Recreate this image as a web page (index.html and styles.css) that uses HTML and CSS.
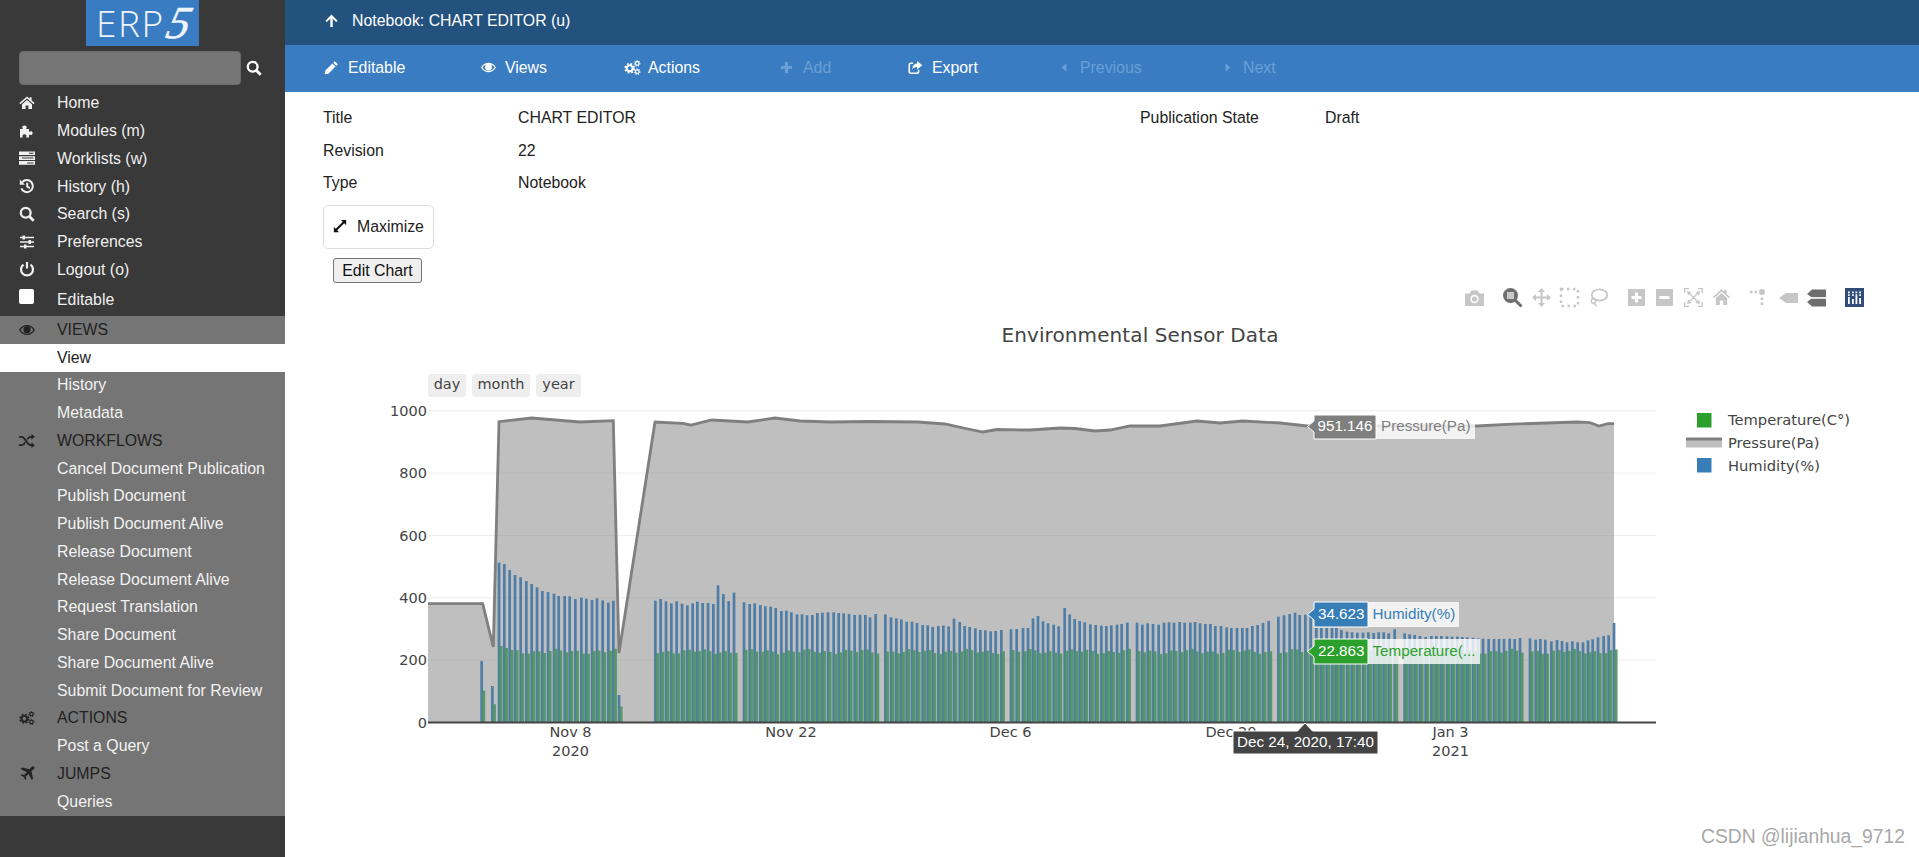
FILE: index.html
```html
<!DOCTYPE html>
<html lang="en">
<head>
<meta charset="utf-8">
<title>Notebook: CHART EDITOR</title>
<link rel="stylesheet" href="styles.css">
</head>
<body>
<svg class="defs" aria-hidden="true">
  <symbol id="i-home" viewBox="0 0 16 16"><path d="M8 1.4 .4 8l1 1.2L8 3.6l6.6 5.6 1-1.2-3-2.6V2.2h-2v1.6z"/><path d="M8 4.900 3 9.200V14h3.600v-3.400h2.800V14H13V9.200z"/></symbol>
  <symbol id="i-puzzle" viewBox="0 0 16 16"><path d="M1 6h3c-.9-.9-1-2.200-.2-3 .8-.8 2.700-.8 3.400 0 .8.8.7 2.100-.2 3h3v3c1-.8 2.300-.9 3.100-.2.800.8.800 2 0 2.700-.8.800-2.100.7-3.100-.1v3.100H7c.7-1 .7-2-.1-2.700-.8-.7-2.100-.7-2.900 0-.7.700-.7 1.700 0 2.700H1z"/></symbol>
  <symbol id="i-tasks" viewBox="0 0 16 16"><path fill-rule="evenodd" d="M0 1.500h16v3.600H0zM10 2.800v1h4.500v-1zM0 6.300h16v3.600H0zM3 7.600v1h11.500v-1zM0 11.100h16v3.600H0zM8 12.400v1h6.500v-1z"/></symbol>
  <symbol id="i-history" viewBox="0 0 16 16"><path class="ln" d="M3.300 4.200a6 6 0 1 1-1 6.200"/><path d="M.8 1.600v5.200H6z"/><path class="ln" d="M8.200 4.800v3.700l2.600 1.600"/></symbol>
  <symbol id="i-search" viewBox="0 0 16 16"><circle class="ln" cx="6.700" cy="6.700" r="4.900" stroke-width="2.300"/><path class="ln" stroke-width="2.800" d="M10.200 10.200l4.500 4.500"/></symbol>
  <symbol id="i-sliders" viewBox="0 0 16 16"><path d="M1 2.800h14v1.400H1zM1 7.300h14v1.400H1zM1 11.800h14v1.400H1z"/><path d="M3.500 1.500h2.500v4H3.500zM9.500 6h2.500v4H9.500zM5 10.500h2.500v4H5z"/></symbol>
  <symbol id="i-power" viewBox="0 0 16 16"><path class="ln" stroke-width="2.200" d="M4.500 3.600a6 6 0 1 0 7 0"/><path class="ln" stroke-width="2.200" d="M8 1v6.500"/></symbol>
  <symbol id="i-eye" viewBox="0 0 16 16"><path fill-rule="evenodd" d="M0 8c2-3.400 4.800-5 8-5s6 1.600 8 5c-2 3.400-4.800 5-8 5S2 11.400 0 8zm1.500 0c1.600 2.400 3.800 3.800 6.500 3.800s4.900-1.400 6.500-3.800C12.900 5.600 10.700 4.200 8 4.200S3.100 5.600 1.500 8z"/><circle cx="8" cy="7.700" r="3.600"/></symbol>
  <symbol id="i-random" viewBox="0 0 16 16"><path class="ln" stroke-width="1.800" d="M0 3.800h2.800c3.400 0 5.400 8.400 8.800 8.400h1.400M0 12.200h2.800c1.400 0 2.500-1.500 3.400-3M8.200 6.200c.9-1.400 2-2.400 3.400-2.400h1.400"/><path d="M12.400 1l3.600 2.800-3.600 2.800zM12.400 9.400l3.600 2.800-3.600 2.800z"/></symbol>
  <symbol id="i-cogs" viewBox="0 0 18 16"><circle class="ln" cx="6" cy="8.800" r="3.200" stroke-width="2.200"/><circle class="ln" cx="6" cy="8.800" r="4.800" stroke-width="1.800" stroke-dasharray="2 1.800"/><circle class="ln" cx="14" cy="3.600" r="1.900" stroke-width="1.300"/><circle class="ln" cx="14" cy="3.600" r="2.900" stroke-width="1.100" stroke-dasharray="1.300 1.200"/><circle class="ln" cx="14" cy="12.400" r="1.900" stroke-width="1.300"/><circle class="ln" cx="14" cy="12.400" r="2.900" stroke-width="1.100" stroke-dasharray="1.300 1.200"/></symbol>
  <symbol id="i-plane" viewBox="0 0 16 16"><path d="M14.600.6c.8.500.9 1.500 0 2.500l-2.600 2.500 1.800 7.800-1.400 1.400-3.400-6.500-3 2.800.7 2.700-1 1-1.800-3.200-3.200-1.800 1-1 2.700.7 2.800-3-6.500-3.400 1.400-1.400 7.800 1.800 2.500-2.600c.4-.4.800-.5 1.200-.3z" transform="translate(1 0) scale(.95)"/></symbol>
  <symbol id="i-up" viewBox="0 0 16 16"><path d="M8 1.500l6.500 6.700-1.500 1.500-3.700-3.700V15H6.700V6L3 9.700 1.500 8.200z"/></symbol>
  <symbol id="i-pencil" viewBox="0 0 16 16"><path d="M11.500 1.200l3.300 3.300-1.600 1.600-3.300-3.300zM9 3.700l3.300 3.300-7.600 7.600-4 .7.700-4z"/></symbol>
  <symbol id="i-plus" viewBox="0 0 16 16"><path d="M6.300 2h3.400v4.300H14v3.400H9.700V14H6.300V9.700H2V6.300h4.300z"/></symbol>
  <symbol id="i-export" viewBox="0 0 16 16"><path class="ln" stroke-width="1.600" d="M5.500 3.500H3.200C2 3.500 1.300 4.200 1.300 5.400v6.900c0 1.200.7 1.900 1.900 1.900h6.200c1.200 0 1.900-.7 1.900-1.900v-2"/><path d="M9.700 1l5.500 4.500-5.500 4.500V7.500C7 7.500 5.300 8.400 4.700 10.500 4.500 6.800 6.300 4 9.700 3.700z"/></symbol>
  <symbol id="i-left" viewBox="0 0 16 16"><path d="M10 3.500v9L5 8z"/></symbol>
  <symbol id="i-right" viewBox="0 0 16 16"><path d="M6 3.500v9L11 8z"/></symbol>
  <symbol id="i-expand" viewBox="0 0 16 16"><path d="M9 1h6v6l-2.200-2.200-8 8L7 15H1V9l2.200 2.200 8-8z"/></symbol>
</svg>

<div class="app">
  <aside class="sidebar">
    <div class="logo"><span class="logo-erp">ERP</span><span class="logo-five">5</span></div>
    <div class="searchbar">
      <input class="searchinput" type="text" aria-label="Search">
      <svg class="search-icon"><use href="#i-search"/></svg>
    </div>
    <nav class="mainnav">
      <a class="row"><svg class="ico"><use href="#i-home"/></svg>Home</a>
      <a class="row"><svg class="ico"><use href="#i-puzzle"/></svg>Modules (m)</a>
      <a class="row"><svg class="ico"><use href="#i-tasks"/></svg>Worklists (w)</a>
      <a class="row"><svg class="ico"><use href="#i-history"/></svg>History (h)</a>
      <a class="row"><svg class="ico"><use href="#i-search"/></svg>Search (s)</a>
      <a class="row"><svg class="ico"><use href="#i-sliders"/></svg>Preferences</a>
      <a class="row"><svg class="ico"><use href="#i-power"/></svg>Logout (o)</a>
      <label class="row row-check"><span class="check"></span>Editable</label>
    </nav>
    <nav class="subnav">
      <div class="row head"><svg class="ico"><use href="#i-eye"/></svg>VIEWS</div>
      <a class="row current">View</a>
      <a class="row">History</a>
      <a class="row">Metadata</a>
      <div class="row head"><svg class="ico"><use href="#i-random"/></svg>WORKFLOWS</div>
      <a class="row">Cancel Document Publication</a>
      <a class="row">Publish Document</a>
      <a class="row">Publish Document Alive</a>
      <a class="row">Release Document</a>
      <a class="row">Release Document Alive</a>
      <a class="row">Request Translation</a>
      <a class="row">Share Document</a>
      <a class="row">Share Document Alive</a>
      <a class="row">Submit Document for Review</a>
      <div class="row head"><svg class="ico"><use href="#i-cogs"/></svg>ACTIONS</div>
      <a class="row">Post a Query</a>
      <div class="row head"><svg class="ico"><use href="#i-plane"/></svg>JUMPS</div>
      <a class="row">Queries</a>
    </nav>
  </aside>

  <main class="content">
    <header class="titlebar"><svg class="ico-up"><use href="#i-up"/></svg>Notebook: CHART EDITOR (u)</header>
    <div class="toolbar">
      <a class="tool"><span class="tool-ico"><svg class="ico-s"><use href="#i-pencil"/></svg></span>Editable</a>
      <a class="tool"><span class="tool-ico"><svg class="ico-s"><use href="#i-eye"/></svg></span>Views</a>
      <a class="tool"><span class="tool-ico"><svg class="ico-s ico-w"><use href="#i-cogs"/></svg></span>Actions</a>
      <a class="tool off"><span class="tool-ico"><svg class="ico-s"><use href="#i-plus"/></svg></span>Add</a>
      <a class="tool"><span class="tool-ico"><svg class="ico-s"><use href="#i-export"/></svg></span>Export</a>
      <a class="tool off"><span class="tool-ico tool-ico-n"><svg class="ico-s"><use href="#i-left"/></svg></span>Previous</a>
      <a class="tool off"><span class="tool-ico tool-ico-n"><svg class="ico-s"><use href="#i-right"/></svg></span>Next</a>
    </div>
    <section class="fields">
      <span>Title</span><span>CHART EDITOR</span><span>Publication State</span><span>Draft</span>
      <span>Revision</span><span>22</span><span></span><span></span>
      <span>Type</span><span>Notebook</span><span></span><span></span>
    </section>
    <a class="maximize"><svg class="ico-max"><use href="#i-expand"/></svg>Maximize</a>
    <button class="editchart" type="button">Edit Chart</button>

    <svg class="chart" viewBox="285 285 1634 572" width="1634" height="572">
      <!-- modebar -->
      <g class="mb">
        <g transform="translate(1465 288)"><path d="M0 5.500h4.500L6.500 2.500h6l2 3H19V18H0z"/><circle cx="9.500" cy="11" r="4.200" fill="#fff"/><circle cx="9.500" cy="11" r="2.600"/></g>
        <g class="mb-on" transform="translate(1503 288)"><circle cx="7.500" cy="7.500" r="7.500"/><rect class="mb-in" x="4" y="4" width="7" height="7"/><path class="mb-ln" stroke-width="3" d="M12 12l6.500 6.500"/></g>
        <g transform="translate(1532 288)"><path class="mb-ln" stroke-width="2" d="M9.500 3v13M3 9.500h13"/><path d="M9.500 0l3.500 4H6zM9.500 19L6 15h7zM0 9.500L4 6v7zM19 9.500L15 13V6z"/></g>
        <rect class="mb-dash" x="1561" y="289" width="17" height="17"/>
        <g transform="translate(1589 288)"><ellipse class="mb-ln" stroke-width="1.800" cx="10.500" cy="7" rx="7.800" ry="5.600"/><circle class="mb-ln" stroke-width="1.400" cx="4.500" cy="13" r="2.200"/><path class="mb-ln" stroke-width="1.400" d="M5 15c.5 1.500 1.500 2.500 3 3.200"/></g>
        <g transform="translate(1628 289)"><rect width="17" height="17"/><path fill="#fff" d="M7 3.500h3V7h3.500v3H10v3.500H7V10H3.500V7H7z"/></g>
        <g transform="translate(1656 289)"><rect width="17" height="17"/><path fill="#fff" d="M3.500 7h10v3h-10z"/></g>
        <g transform="translate(1684 288)"><path class="mb-ln" stroke-width="1.300" d="M.7 5V.7H5M14 .7h4.300V5M18.300 14v4.300H14M5 18.300H.7V14M4 4l11 11M15 4L4 15"/><path d="M3 3l4.500 1-3.500 3.500zM16 3l-1 4.500L11.500 4zM16 16l-4.500-1 3.500-3.500zM3 16l1-4.500L7.500 15z"/></g>
        <g transform="translate(1713 288)"><path d="M8.500 1L0 9l1 1.200 7.500-6.700L16 10.200 17 9 13.700 5.900V2h-2.400v1.700z"/><path d="M8.500 5L2.800 10v7h4v-4.500h3.400V17h4v-7z"/></g>
        <g transform="translate(1750 288)"><circle cx="12" cy="4" r="3"/><path d="M0 2.700h2.500v2.500H0zM4.500 2.700H7v2.500H4.500zM10.700 9.500h2.600V12h-2.600zM10.700 14.500h2.600V17h-2.600z"/></g>
        <path d="M1779 298l7-5h12v10h-12z"/>
        <g class="mb-on"><path d="M1807 294l5-4.500h14v8h-14zM1807 302l5-4h14v8.500h-14z"/><path class="mb-gap" d="M1810 298h16"/></g>
        <g transform="translate(1845 288)"><rect class="mb-logo" width="19" height="19"/><g class="mb-logo-in"><rect x="3" y="9" width="1.800" height="7"/><rect x="7" y="11" width="1.800" height="5"/><rect x="10.500" y="8" width="1.800" height="8"/><rect x="14.200" y="10" width="1.800" height="6"/><rect x="3" y="3.500" width="1.800" height="1.800"/><rect x="7" y="3.500" width="1.800" height="1.800"/><rect x="10.500" y="3.500" width="1.800" height="1.800"/><rect x="14.200" y="3.500" width="1.800" height="1.800"/><rect x="3" y="6.300" width="1.800" height="1.600"/><rect x="7" y="6.300" width="1.800" height="1.600"/><rect x="10.500" y="6.300" width="1.800" height="1.600"/><rect x="14.200" y="6.300" width="1.800" height="1.600"/></g></g>
      </g>

      <text class="c-title" x="1140" y="342">Environmental Sensor Data</text>

      <!-- range selector -->
      <g class="range">
        <rect x="428" y="374" width="38" height="23" rx="3"/><text x="447" y="388.700">day</text>
        <rect x="472" y="374" width="58" height="23" rx="3"/><text x="501" y="388.700">month</text>
        <rect x="536" y="374" width="45" height="23" rx="3"/><text x="558.500" y="388.700">year</text>
      </g>

      <!-- grid -->
      <path class="grid" d="M428 410.700H1656M428 473H1656M428 535.500H1656M428 597.800H1656M428 660.100H1656"/>

      <!-- y ticks -->
      <g class="ytick">
        <text x="427" y="415.500">1000</text><text x="427" y="477.500">800</text><text x="427" y="540.500">600</text>
        <text x="427" y="602.500">400</text><text x="427" y="664.500">200</text><text x="427" y="727.500">0</text>
      </g>

      <!-- x ticks -->
      <g class="xtick">
        <text x="570.500" y="737">Nov 8</text><text x="570.500" y="755.500">2020</text>
        <text x="791" y="737">Nov 22</text>
        <text x="1010.500" y="737">Dec 6</text>
        <text x="1231" y="737">Dec 20</text>
        <text x="1450.500" y="737">Jan 3</text><text x="1450.500" y="755.500">2021</text>
      </g>

      <!-- pressure area -->
      <path class="area" d="M428 603.700H482.700L493.300 647 499 421.700 531.700 418 580 422 613.300 420.700 619 653 655 422 683 423.300 691 425 711.700 420 748 422 775 418 800 421 830 422 870 421.500 918 422 945 424 968 429 983 432 997 429.500 1030 430 1060 428 1075 428.500 1095 431 1110 430 1130 426 1160 426 1197 421 1220 423 1243 421 1280 423 1307 426 1477 426 1507 424.300 1577 422 1590 422.700 1599 426 1608 423.700 1614 423.700V722.500H428z"/>
      <path class="area-line" d="M428 603.700H482.700L493.300 647 499 421.700 531.700 418 580 422 613.300 420.700 619 653 655 422 683 423.300 691 425 711.700 420 748 422 775 418 800 421 830 422 870 421.500 918 422 945 424 968 429 983 432 997 429.500 1030 430 1060 428 1075 428.500 1095 431 1110 430 1130 426 1160 426 1197 421 1220 423 1243 421 1280 423 1307 426 1477 426 1507 424.300 1577 422 1590 422.700 1599 426 1608 423.700 1614 423.700"/>

      <g id="bars"></g>

      <path class="axis" d="M428 722.500H1656"/>

      <!-- legend -->
      <rect class="sw-green" x="1697" y="413" width="14.500" height="14.500"/>
      <rect class="sw-area" x="1686" y="439" width="36" height="8.500"/>
      <path class="area-line" d="M1686 439H1722"/>
      <rect class="sw-blue" x="1697" y="458" width="14.500" height="14.500"/>
      <g class="legend">
        <text x="1728" y="425">Temperature(C°)</text>
        <text x="1728" y="448">Pressure(Pa)</text>
        <text x="1728" y="471">Humidity(%)</text>
      </g>

      <!-- hover labels -->
      <g class="hover">
        <rect class="hl-bg" x="1376" y="415" width="99" height="24"/>
        <path class="hl-tag hl-gray" d="M1307.500 426.500l6.500-5.500v-6h62v24h-62v-7z"/>
        <text class="hl-val" x="1317.500" y="431">951.146</text>
        <text class="hl-n-gray" x="1381" y="431">Pressure(Pa)</text>

        <rect class="hl-bg" x="1368" y="602" width="91" height="25"/>
        <path class="hl-tag hl-blue" d="M1307.500 614.500l6.500-5.500v-7h54v25h-54v-7z"/>
        <text class="hl-val" x="1318" y="619">34.623</text>
        <text class="hl-n-blue" x="1372.500" y="619">Humidity(%)</text>

        <rect class="hl-bg" x="1368" y="639" width="112" height="25"/>
        <path class="hl-tag hl-green" d="M1307.500 651.500l6.500-5.500v-7h54v25h-54v-7z"/>
        <text class="hl-val" x="1318" y="655.500">22.863</text>
        <text class="hl-n-green" x="1372.500" y="655.500">Temperature(...</text>

        <path class="hl-x" d="M1305 723l7.500 8h65.500v23H1233v-23h64.500z"/>
        <text class="hl-xt" x="1305.500" y="746.500">Dec 24, 2020, 17:40</text>
      </g>
    </svg>
  </main>
</div>
<div class="watermark">CSDN @lijianhua_9712</div>
<script src="app.js"></script>
</body>
</html>
```
FILE: styles.css
```css
* { box-sizing: border-box; }
html, body { margin: 0; height: 100%; overflow: hidden; }
body { font: 15.85px/1.2 "Liberation Sans", Arial, sans-serif; color: #222; background: #fff; }
.defs { position: absolute; width: 0; height: 0; }
symbol { fill: currentColor; stroke-width: 2; }
.ln { fill: none; stroke: currentColor; }

.app { display: flex; height: 857px; }

/* sidebar */
.sidebar { width: 285px; flex: none; background: #393939; color: #efefef; }
.logo { width: 113px; height: 46px; margin-left: 86px; padding-left: 10px; background: #3a7cc2; color: #eef4fa; display: flex; align-items: center; }
.logo-erp { font: 300 37px/44px "Open Sans", "Liberation Sans", sans-serif; letter-spacing: 1.6px; }
.logo-five { display: inline-block; font: italic 400 46px/44px "Liberation Serif", serif; margin-left: 3px; transform: skewX(-14deg); -webkit-text-stroke: .5px #eef4fa; }
.searchbar { display: flex; align-items: center; height: 34px; margin-top: 5px; padding-left: 19px; gap: 5px; }
.searchinput { width: 222px; height: 34px; border: 1px solid #6a6a6a; border-radius: 4px; background: #757575; }
.search-icon { width: 16px; height: 16px; color: #fff; }
.mainnav { margin-top: 4px; }
.row { display: flex; align-items: center; height: 27.75px; padding-left: 57px; position: relative; }
.ico { position: absolute; left: 19px; top: 50%; width: 16px; height: 16px; margin-top: -8px; color: #efefef; }
.row-check { height: 32.75px; }
.check { position: absolute; left: 19px; top: 6px; width: 15px; height: 15px; border-radius: 2px; background: #fff; }
.subnav { background: #757575; }
.subnav .row { color: #f2f2f2; padding-bottom: 1px; }
.subnav .head { color: #222; }
.subnav .head .ico { color: #222; }
.subnav .current { background: #fff; color: #222; }

/* main */
.content { flex: 1; min-width: 0; display: flex; flex-direction: column; align-items: flex-start; }
.titlebar { align-self: stretch; height: 45px; background: #24527f; color: #fff; display: flex; align-items: center; padding: 0 0 3px 39px; gap: 13px; }
.ico-up { width: 15px; height: 15px; color: #fff; }
.toolbar { align-self: stretch; height: 47px; background: #3a7cc2; display: grid; grid-template-columns: 157px 143px 155px 129px 151px 163px auto; padding: 0 0 2px 39px; align-items: center; color: #fff; }
.tool { display: flex; align-items: center; }
.tool.off { color: #6a9fd6; }
.tool-ico { width: 24px; flex: none; display: flex; align-items: center; }
.tool-ico-n { width: 21px; }
.tool-ico-n .ico-s { margin-left: -2px; }
.ico-s { width: 15px; height: 15px; color: inherit; }
.ico-w { width: 17px; }
.fields { display: grid; grid-template-columns: 195px 622px 185px auto; grid-auto-rows: 32.5px; align-items: center; padding: 9.75px 0 0 38px; align-self: stretch; }
.maximize { display: flex; align-items: center; gap: 10px; width: 111px; height: 44px; margin: 6px 0 0 38px; padding: 0 0 2px 9px; border: 1px solid #ddd; border-radius: 5px; background: #fff; }
.ico-max { width: 14px; height: 14px; color: #111; flex: none; }
.editchart { width: 89px; height: 25px; margin: 9px 0 0 48px; padding: 0; border: 1px solid #767676; border-radius: 3px; background: #efefef; color: #111; font: 15.85px "Liberation Sans", Arial, sans-serif; }
.chart { display: block; margin-top: 2px; flex: none; }

/* chart text */
.chart text { font-family: "DejaVu Sans", Verdana, sans-serif; }
.c-title { font-size: 20px; fill: #444; text-anchor: middle; letter-spacing: .1px; }
.range rect { fill: #eee; }
.range text { font-size: 14.500px; fill: #444; text-anchor: middle; }
.ytick text { font-size: 14.500px; fill: #444; text-anchor: end; }
.xtick text { font-size: 14.500px; fill: #444; text-anchor: middle; }
.legend text { font-size: 14.700px; fill: #444; }
.grid { fill: none; stroke: #eee; stroke-width: 1; }
.area { fill: #7f7f7f; fill-opacity: .5; }
.area-line { fill: none; stroke: #7f7f7f; stroke-width: 2.800; }
.axis { fill: none; stroke: #444; stroke-width: 2; }
.bar-b { fill: #4e7ea7; }
.bar-g { fill: #4f9267; fill-opacity: .92; }
.sw-green { fill: #2ca02c; }
.sw-blue { fill: #377eb8; }
.sw-area { fill: #bfbfbf; }

/* hover */
.hl-bg { fill: #fff; fill-opacity: .8; }
.hl-tag { stroke: #fff; stroke-width: 1; }
.hl-gray { fill: #7f7f7f; }
.hl-blue { fill: #377eb8; }
.hl-green { fill: #2ca02c; }
.chart .hover text { font-family: "Liberation Sans", Arial, sans-serif; font-size: 15.200px; }
.hover .hl-val { fill: #fff; }
.hover .hl-n-gray { fill: #7f7f7f; }
.hover .hl-n-blue { fill: #377eb8; }
.hover .hl-n-green { fill: #2ca02c; }
.hl-x { fill: #444; stroke: #fff; stroke-width: 1; }
.hover .hl-xt { fill: #fff; text-anchor: middle; }

/* modebar */
.mb { fill: #c6c6c6; }
.mb-ln { fill: none; stroke: #c6c6c6; }
.mb-dash { fill: none; stroke: #c6c6c6; stroke-width: 2.500; stroke-dasharray: 2.500 3.500; }
.mb-on { fill: #6e6e6e; }
.mb-on .mb-ln { stroke: #6e6e6e; }
.mb-in { fill: #c9c9c9; }
.mb-gap { fill: none; stroke: #fff; stroke-width: 1.500; }
.mb-logo { fill: #2f4d78; }
.mb-logo-in { fill: #fff; }

.watermark { position: absolute; left: 1701px; top: 825px; font-size: 19.300px; line-height: 24px; color: #a8a8a8; white-space: nowrap; }
```
FILE: app.js
```js
// Sensor bars: [originX, originY, [x, top, x, top, ...]] in thirds of a pixel from the origin.
var SERIES = [
  [400, 360, [241,903, 273,978,
    293,608, 309,612, 325,630, 341,645, 358,652, 375,663, 391,672, 407,682, 423,693, 440,696, 458,701, 472,708, 490,708, 505,709, 522,717, 540,713, 555,716, 572,720, 587,715, 604,721, 621,728, 636,722, 653,1005,
    762,722, 778,717, 794,724, 810,730, 826,724, 842,731, 858,736, 874,730, 888,725, 904,729, 920,729, 936,732, 950,676, 966,702, 982,723, 998,698,
    1028,727, 1045,732, 1060,730, 1077,735, 1092,739, 1108,740, 1123,744]],
  [780, 560, [0,153, 15,152, 30,157, 47,163, 62,163, 77,166, 93,165, 108,159, 123,158, 140,157, 157,157, 172,159, 187,160, 203,162, 220,165, 236,164, 252,165, 266,172, 283,162,
    312,163, 329,172, 345,175, 360,178, 376,185, 392,185, 407,189, 424,195, 439,196, 454,201, 471,198, 486,197, 502,199, 518,176, 535,186, 550,198, 565,201, 582,205, 597,210, 612,211, 628,214, 643,213, 660,210,
    689,208, 706,207, 725,204, 740,204, 755,175, 770,168, 785,184, 800,190, 817,194, 832,199, 850,144, 865,163, 880,177, 895,183, 910,187, 927,193, 943,195, 960,197, 975,198, 990,196, 1007,194, 1021,192, 1038,188,
    1067,188, 1083,194, 1099,190, 1115,192, 1132,194, 1148,188, 1163,187, 1178,188, 1195,186]],
  [1180, 400, [10,668, 27,668, 41,666, 56,670, 72,672, 87,672, 102,678, 119,678, 136,682, 150,684, 167,684, 183,684, 197,684, 213,678, 229,675, 245,669, 262,663,
    291,650, 308,646, 325,642, 341,638, 355,645, 372,644, 388,650, 405,684, 420,684, 436,684, 452,684, 465,684, 480,690, 497,695, 512,697, 528,698, 545,698, 561,697, 577,699, 592,697, 607,697, 622,700, 640,688,
    670,700, 685,703, 700,705, 716,708, 733,711, 750,708, 765,708, 780,708, 797,709, 812,710, 828,710, 843,711, 858,712, 875,713, 890,715, 905,716, 922,717, 938,717, 953,717, 968,717, 985,716, 1000,717, 1016,714,
    1046,715, 1063,719, 1077,717, 1092,719, 1110,724, 1127,720, 1142,723, 1157,727, 1173,724, 1189,727, 1205,727, 1220,721, 1234,718, 1250,712, 1267,708, 1282,706, 1298,669]]
];
var GREEN_OVERRIDE = { 0: 31.7, 1: 18.3, 2: 76.5, 3: 74.5, 4: 72.5, 24: 16 };
var BASE = 722.5, NS = 'http://www.w3.org/2000/svg';
var holder = document.getElementById('bars');

function bar(cls, x, w, h) {
  var r = document.createElementNS(NS, 'rect');
  r.setAttribute('class', cls);
  r.setAttribute('x', x.toFixed(2));
  r.setAttribute('y', (BASE - h).toFixed(2));
  r.setAttribute('width', w);
  r.setAttribute('height', h.toFixed(2));
  holder.appendChild(r);
}

var n = 0;
SERIES.forEach(function (s) {
  for (var j = 0; j < s[2].length; j += 2) {
    var x = s[0] + s[2][j] / 3, top = s[1] + s[2][j + 1] / 3;
    var g = GREEN_OVERRIDE[n] !== undefined ? GREEN_OVERRIDE[n]
      : 71 + 1.6 * Math.sin(n * 1.7) + 1.2 * Math.sin(n * 0.63);
    bar('bar-b', x, 2.7, BASE - top);
    bar('bar-g', x + 1.5, 3.4, g);
    n++;
  }
});
```
